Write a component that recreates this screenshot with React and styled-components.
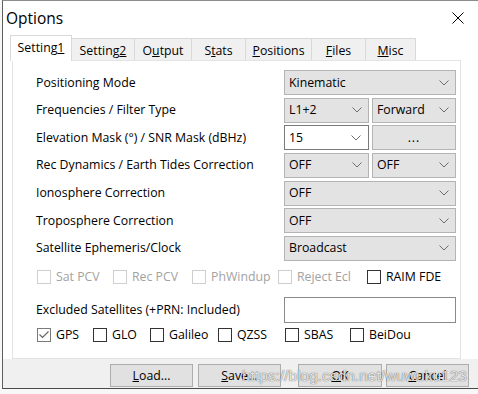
import React from 'react';
import styled, { createGlobalStyle } from 'styled-components';

const FONT = `"Open Sans", "Noto Sans", sans-serif`;

const GlobalStyle = createGlobalStyle`
  html, body { margin: 0; padding: 0; background: #f7f7f7; }
  body { font-family: ${FONT}; }
  * { box-sizing: border-box; }
`;

const Screen = styled.div`
  position: relative;
  width: 478px;
  height: 394px;
  overflow: hidden;
  background: #f7f7f7;
  font-family: ${FONT};
  font-size: 12.3px;
  color: #000;
`;

const Window = styled.div`
  margin-left: 2px;
  width: 476px;
  height: 389px;
  border-top: 1px solid #8c8c8c;
  border-left: 1px solid #5f5f5f;
  border-bottom: 1px solid #4a4a4a;
  background: #fff;
  display: flex;
  flex-direction: column;
`;

const TitleBar = styled.div`
  height: 33px;
  display: flex;
  align-items: center;
  padding-left: 3px;
`;

const Title = styled.div`
  font-size: 15.5px;
  line-height: 20px;
`;

const CloseBtn = styled.div`
  margin-left: auto;
  width: 40px;
  height: 33px;
  display: flex;
  align-items: center;
  justify-content: center;
`;

const TabStrip = styled.div`
  height: 26px;
  display: flex;
  align-items: flex-end;
  padding-left: 7px;
`;

const Tab = styled.div`
  position: relative;
  width: ${p => p.$w}px;
  height: ${p => (p.$active ? 26 : 22)}px;
  margin-bottom: ${p => (p.$active ? -1 : 0)}px;
  margin-left: ${p => (p.$first ? 0 : -1)}px;
  z-index: ${p => (p.$active ? 2 : 1)};
  background: ${p => (p.$active ? '#fff' : '#f0f0f0')};
  border: 1px solid #d9d9d9;
  border-bottom: none;
  display: flex;
  align-items: center;
  justify-content: center;
  padding-top: ${p => (p.$active ? 0 : 2)}px;
  padding-bottom: ${p => (p.$active ? 1 : 0)}px;
  white-space: nowrap;
  line-height: 16px;
`;

const Accel = styled.span`
  text-decoration: underline;
  text-underline-offset: 1px;
`;

const Page = styled.div`
  margin-left: 9px;
  width: 449px;
  height: 299px;
  border: 1px solid #e3e3e3;
  background: #fff;
  padding: 9px 4px 0 23px;
  display: flex;
  flex-direction: column;
`;

const FormGrid = styled.div`
  display: grid;
  grid-template-columns: 1fr 172px;
  grid-auto-rows: 25px;
  row-gap: 2.67px;
`;

const Label = styled.div`
  display: flex;
  align-items: center;
  white-space: nowrap;
  line-height: 16px;
`;

const Pair = styled.div`
  display: grid;
  grid-template-columns: 85px 84px;
  column-gap: 3px;
`;

const ComboBox = styled.div`
  height: 25px;
  display: flex;
  align-items: center;
  padding-left: 4px;
  padding-right: ${p => (p.$edit ? 7 : 6)}px;
  background: ${p => (p.$edit ? '#fff' : '#e3e3e3')};
  border: 1px solid ${p => (p.$edit ? '#7a7a7a' : '#b4b4b4')};
  line-height: 16px;
  white-space: nowrap;
`;

const ComboText = styled.span`
  flex: 1;
`;

const PushBox = styled.div`
  height: 25px;
  display: flex;
  align-items: center;
  justify-content: center;
  background: #e3e3e3;
  border: 1px solid #b4b4b4;
  line-height: 16px;
  letter-spacing: 1px;
`;

const CheckRow = styled.div`
  display: flex;
  align-items: center;
  height: 16px;
  margin-top: ${p => p.$mt}px;
`;

const CheckItem = styled.div`
  display: flex;
  align-items: center;
  gap: 5px;
  width: ${p => (p.$w ? `${p.$w}px` : 'auto')};
  flex: none;
  padding-left: 1px;
  white-space: nowrap;
  line-height: 16px;
  color: ${p => (p.$disabled ? '#a2a2a2' : '#000')};
`;

const Box = styled.span`
  width: 14px;
  height: 14px;
  flex: none;
  background: #fff;
  border: 1px solid ${p => p.$color};
  display: flex;
  align-items: center;
  justify-content: center;
`;

const ExcludedRow = styled.div`
  display: grid;
  grid-template-columns: 1fr 172px;
  height: 26px;
  margin-top: 12px;
`;

const TextInput = styled.div`
  height: 26px;
  border: 1px solid #8a8a8a;
  background: #fff;
`;

const ButtonBar = styled.div`
  height: 29px;
  background: #f0f0f0;
  display: flex;
  padding: 5px 0 0 107px;
`;

const Button = styled.div`
  width: ${p => p.$w}px;
  height: 23px;
  margin-left: ${p => p.$ml}px;
  background: #e1e1e1;
  border: 1px solid #adadad;
  display: flex;
  align-items: center;
  justify-content: center;
  line-height: 16px;
`;

const Watermark = styled.div`
  position: absolute;
  left: 242px;
  top: 366px;
  font-family: "Liberation Sans", Arial, sans-serif;
  font-size: 15.5px;
  line-height: 20px;
  color: rgba(255, 255, 255, 0.85);
  text-shadow: 0 0 1px rgba(0, 0, 0, 0.55), 0 0 1px rgba(0, 0, 0, 0.35);
  white-space: nowrap;
  pointer-events: none;
`;

const Chevron = () => (
  <svg width="10" height="6" viewBox="0 0 10 6">
    <polyline points="0.5,0.5 5,5 9.5,0.5" fill="none" stroke="#6e6e6e" strokeWidth="1" />
  </svg>
);

const Combo = ({ children, edit }) => (
  <ComboBox $edit={edit}>
    <ComboText>{children}</ComboText>
    <Chevron />
  </ComboBox>
);

const Check = ({ label, w, disabled, checked }) => (
  <CheckItem $w={w} $disabled={disabled}>
    <Box $color={disabled ? '#cfcfcf' : checked ? '#7a7a7a' : '#333'}>
      {checked && (
        <svg width="10" height="8" viewBox="0 0 10 8">
          <polyline points="0.5,3.5 3.5,6.5 9.5,0.5" fill="none" stroke="#666" strokeWidth="1.2" />
        </svg>
      )}
    </Box>
    <span>{label}</span>
  </CheckItem>
);

export default function App() {
  return (
    <>
      <GlobalStyle />
      <Screen>
        <Window>
          <TitleBar>
            <Title>Options</Title>
            <CloseBtn>
              <svg width="12" height="12" viewBox="0 0 12 12">
                <line x1="0.5" y1="0.5" x2="11.5" y2="11.5" stroke="#000" strokeWidth="1" />
                <line x1="11.5" y1="0.5" x2="0.5" y2="11.5" stroke="#000" strokeWidth="1" />
              </svg>
            </CloseBtn>
          </TitleBar>
          <TabStrip>
            <Tab $active $first $w={62}>Setting<Accel>1</Accel></Tab>
            <Tab $w={64}>Setting<Accel>2</Accel></Tab>
            <Tab $w={58}>O<Accel>u</Accel>tput</Tab>
            <Tab $w={55}>S<Accel>t</Accel>ats</Tab>
            <Tab $w={67}><Accel>P</Accel>ositions</Tab>
            <Tab $w={55}><Accel>F</Accel>iles</Tab>
            <Tab $w={51}><Accel>M</Accel>isc</Tab>
          </TabStrip>
          <Page>
            <FormGrid>
              <Label>Positioning Mode</Label>
              <Combo>Kinematic</Combo>
              <Label>Frequencies / Filter Type</Label>
              <Pair>
                <Combo>L1+2</Combo>
                <Combo>Forward</Combo>
              </Pair>
              <Label>Elevation Mask (°) / SNR Mask (dBHz)</Label>
              <Pair>
                <Combo edit>15</Combo>
                <PushBox>...</PushBox>
              </Pair>
              <Label>Rec Dynamics / Earth Tides Correction</Label>
              <Pair>
                <Combo>OFF</Combo>
                <Combo>OFF</Combo>
              </Pair>
              <Label>Ionosphere Correction</Label>
              <Combo>OFF</Combo>
              <Label>Troposphere Correction</Label>
              <Combo>OFF</Combo>
              <Label>Satellite Ephemeris/Clock</Label>
              <Combo>Broadcast</Combo>
            </FormGrid>
            <CheckRow $mt={8}>
              <Check label="Sat PCV" w={76} disabled />
              <Check label="Rec PCV" w={79} disabled />
              <Check label="PhWindup" w={86} disabled />
              <Check label="Reject Ecl" w={89} disabled />
              <Check label="RAIM FDE" />
            </CheckRow>
            <ExcludedRow>
              <Label>Excluded Satellites (+PRN: Included)</Label>
              <TextInput />
            </ExcludedRow>
            <CheckRow $mt={4}>
              <Check label="GPS" w={56} checked />
              <Check label="GLO" w={57} />
              <Check label="Galileo" w={68} />
              <Check label="QZSS" w={67} />
              <Check label="SBAS" w={65} />
              <Check label="BeiDou" />
            </CheckRow>
          </Page>
          <ButtonBar>
            <Button $w={83} $ml={0}><Accel>L</Accel>oad...</Button>
            <Button $w={83} $ml={5}><Accel>S</Accel>ave...</Button>
            <Button $w={84} $ml={17}><Accel>O</Accel>K</Button>
            <Button $w={83} $ml={4}><Accel>C</Accel>ancel</Button>
          </ButtonBar>
        </Window>
        <Watermark>https://blog.csdn.net/wuwuku123</Watermark>
      </Screen>
    </>
  );
}
